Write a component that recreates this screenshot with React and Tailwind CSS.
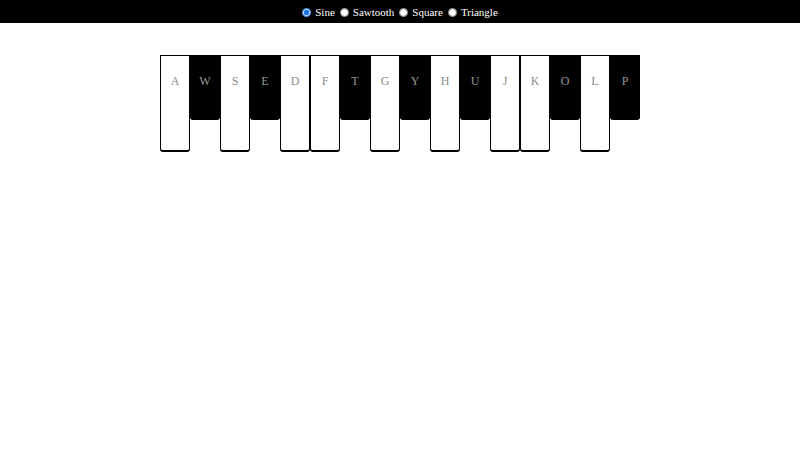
import React, { useState } from 'react';

const keys = [
  { note: 'A', black: false },
  { note: 'W', black: true },
  { note: 'S', black: false },
  { note: 'E', black: true },
  { note: 'D', black: false },
  { note: 'F', black: false },
  { note: 'T', black: true },
  { note: 'G', black: false },
  { note: 'Y', black: true },
  { note: 'H', black: false },
  { note: 'U', black: true },
  { note: 'J', black: false },
  { note: 'K', black: false },
  { note: 'O', black: true },
  { note: 'L', black: false },
  { note: 'P', black: true },
];

const waves = ['Sine', 'Sawtooth', 'Square', 'Triangle'];

export default function App() {
  const [wave, setWave] = useState('Sine');

  return (
    <div className="min-h-[450px] bg-white font-['Liberation_Serif',serif]">
      {/* Waveform picker */}
      <div className="h-[23px] bg-black flex items-center justify-center gap-[5px] pt-[1px] text-white text-[11px]">
        {waves.map(w => (
          <label key={w} className="flex items-center gap-[4px]">
            <input
              type="radio"
              name="wave"
              checked={wave === w}
              onChange={() => setWave(w)}
              className="m-0 w-[9px] h-[9px] accent-[#1a73e8]"
            />
            <span>{w}</span>
          </label>
        ))}
      </div>

      {/* Keyboard */}
      <div className="flex justify-center items-start pt-[32px]">
        {keys.map(({ note, black }) => (
          <div
            key={note}
            className={
              black
                ? 'w-[30px] h-[65px] bg-black rounded-b-[3px] flex justify-center pt-[17px] text-[12px] text-[#999999]'
                : 'w-[30px] h-[97px] bg-white border border-black border-b-2 rounded-b-[3px] flex justify-center pt-[16px] text-[12px] text-[#8a8a8a]'
            }
          >
            {note}
          </div>
        ))}
      </div>
    </div>
  );
}
